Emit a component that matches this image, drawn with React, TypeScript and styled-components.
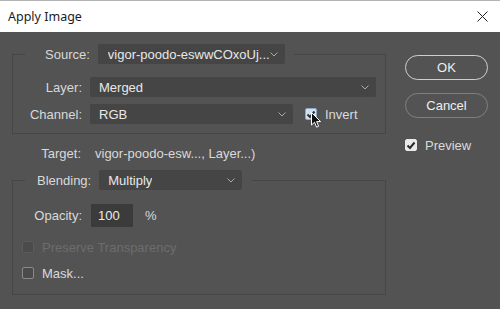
import styled, { createGlobalStyle } from "styled-components";

const GlobalStyle = createGlobalStyle`
    html, body {
        margin: 0;
        padding: 0;
        background: #535353;
    }
    body {
        font-family: "Liberation Sans", Arial, sans-serif;
        font-size: 13px;
    }
`;

const Chevron = () => (
    <svg width="8" height="5" viewBox="0 0 8 5">
        <polyline points="0.5,0.5 4,4 7.5,0.5" fill="none" stroke="#a9a9a9" strokeWidth="1" />
    </svg>
);

const Check = ({ color }: { color: string }) => (
    <svg width="10" height="9" viewBox="0 0 10 9">
        <polyline points="1.5,4.5 4,7 8.5,1.5" fill="none" stroke={color} strokeWidth="2" />
    </svg>
);

const Cursor = () => (
    <svg width="11" height="17" viewBox="0 0 11 17">
        <path d="M0.5 0.5 L0.5 13 L3.5 10.2 L5.6 15.2 L7.6 14.3 L5.6 9.6 L9.6 9.6 Z" fill="#111" stroke="#fff" strokeWidth="1" />
    </svg>
);

interface SelectProps {
    value: string;
    width: number;
    pad?: number;
}

const Select = ({ value, width, pad = 9 }: SelectProps) => (
    <SelectBox $width={width} $pad={pad}>
        <SelectText>{value}</SelectText>
        <Chevron />
    </SelectBox>
);

interface CheckProps {
    label: string;
    checked?: boolean;
    disabled?: boolean;
    hover?: boolean;
}

const CheckOption = ({ label, checked, disabled, hover }: CheckProps) => (
    <CheckRow $disabled={disabled}>
        <CheckBox $checked={checked} $disabled={disabled} $hover={hover}>
            {checked && <Check color={hover ? "#2c3440" : "#2a2a2a"} />}
            {hover && (
                <CursorSpot>
                    <Cursor />
                </CursorSpot>
            )}
        </CheckBox>
        <span>{label}</span>
    </CheckRow>
);

const App = () => {
    return (
        <>
            <GlobalStyle />
            <Window>
                <TitleBar>
                    <Title>Apply Image</Title>
                    <svg width="11" height="11" viewBox="0 0 11 11">
                        <path d="M0.5 0.5 L10.5 10.5 M10.5 0.5 L0.5 10.5" stroke="#222" strokeWidth="1" />
                    </svg>
                </TitleBar>
                <Body>
                    <Main>
                        <Group>
                            <Legend $padLeft={20} $padRight={9}>
                                <span>Source:</span>
                                <Select value="vigor-poodo-eswwCOxoUj..." width={187} pad={10} />
                            </Legend>
                            <Rows $top={13} $bottom={9} $gap={7}>
                                <Row>
                                    <Label>Layer:</Label>
                                    <Select value="Merged" width={286} />
                                </Row>
                                <Row>
                                    <Label>Channel:</Label>
                                    <Select value="RGB" width={203} />
                                    <InvertSpot>
                                        <CheckOption label="Invert" checked hover />
                                    </InvertSpot>
                                </Row>
                            </Rows>
                        </Group>
                        <TargetRow>
                            <Label>Target:</Label>
                            <TargetValue>vigor-poodo-esw..., Layer...)</TargetValue>
                        </TargetRow>
                        <Group>
                            <Legend $padLeft={12} $padRight={10}>
                                <span>Blending:</span>
                                <Select value="Multiply" width={143} />
                            </Legend>
                            <Rows $top={15} $bottom={12} $gap={0}>
                                <Row>
                                    <Label>Opacity:</Label>
                                    <NumberInput>100</NumberInput>
                                    <Percent>%</Percent>
                                </Row>
                                <Options>
                                    <CheckOption label="Preserve Transparency" disabled />
                                    <CheckOption label="Mask..." />
                                </Options>
                            </Rows>
                        </Group>
                    </Main>
                    <Side>
                        <Button $primary>OK</Button>
                        <Button>Cancel</Button>
                        <PreviewSpot>
                            <CheckOption label="Preview" checked />
                        </PreviewSpot>
                    </Side>
                </Body>
            </Window>
        </>
    );
};
export default App;

const Window = styled.div`
    width: 500px;
    height: 309px;
    display: flex;
    flex-direction: column;
    overflow: hidden;
    background: #535353;
`;

const TitleBar = styled.div`
    height: 31px;
    flex: none;
    background: #ffffff;
    border-top: 1px solid #b4b4b4;
    display: flex;
    align-items: center;
    justify-content: space-between;
    padding: 0 12px 0 8px;
`;

const Title = styled.div`
    font-family: "Noto Sans", "Open Sans", sans-serif;
    font-size: 12.5px;
    color: #1b1b1b;
    padding-bottom: 1px;
`;

const Body = styled.div`
    flex: 1;
    display: flex;
    padding: 12px 0 0 12px;
    color: #d9d9d9;
`;

const Main = styled.div`
    width: 374px;
    display: flex;
    flex-direction: column;
`;

const Group = styled.fieldset`
    margin: 0;
    padding: 0;
    min-width: 0;
    border: 1px solid #464646;
`;

const Legend = styled.legend<{ $padLeft: number; $padRight: number }>`
    display: flex;
    align-items: center;
    gap: 8px;
    margin-left: 12px;
    padding: 0 ${({ $padRight }) => $padRight}px 0 ${({ $padLeft }) => $padLeft}px;
    color: #d9d9d9;
`;

const Rows = styled.div<{ $top: number; $bottom: number; $gap: number }>`
    display: flex;
    flex-direction: column;
    gap: ${({ $gap }) => $gap}px;
    padding: ${({ $top }) => $top}px 0 ${({ $bottom }) => $bottom}px 0;
`;

const Row = styled.div`
    display: flex;
    align-items: center;
    height: 20px;
`;

const Label = styled.div`
    width: 69px;
    margin-right: 8px;
    text-align: right;
    flex: none;
`;

const SelectBox = styled.div<{ $width: number; $pad: number }>`
    width: ${({ $width }) => $width}px;
    height: 20px;
    box-sizing: border-box;
    background: #454545;
    border-radius: 2px;
    display: flex;
    align-items: center;
    justify-content: space-between;
    padding: 0 7px 0 ${({ $pad }) => $pad}px;
    color: #e8e8e8;
    flex: none;
`;

const SelectText = styled.span`
    white-space: nowrap;
    overflow: hidden;
`;

const InvertSpot = styled.div`
    margin-left: 12px;
`;

const CheckRow = styled.label<{ $disabled?: boolean }>`
    display: flex;
    align-items: center;
    gap: 8px;
    height: 18px;
    color: ${({ $disabled }) => ($disabled ? "#6d6d6d" : "#dadada")};
`;

const CheckBox = styled.span<{ $checked?: boolean; $disabled?: boolean; $hover?: boolean }>`
    position: relative;
    width: 12px;
    height: 12px;
    box-sizing: border-box;
    border-radius: 2px;
    display: flex;
    align-items: center;
    justify-content: center;
    background: ${({ $checked, $hover }) => ($hover ? "#d3dfec" : $checked ? "#e9e9e9" : "#4b4b4b")};
    border: 1px solid
        ${({ $checked, $disabled, $hover }) =>
            $hover ? "#8ea9c8" : $checked ? "#e9e9e9" : $disabled ? "#5c5c5c" : "#8a8a8a"};
`;

const CursorSpot = styled.span`
    position: absolute;
    left: 5px;
    top: 3px;
    line-height: 0;
`;

const TargetRow = styled.div`
    display: flex;
    align-items: center;
    height: 20px;
    margin: 9px 0 7px 0;
`;

const TargetValue = styled.div`
    margin-left: 6px;
    color: #d9d9d9;
`;

const NumberInput = styled.div`
    width: 42px;
    height: 23px;
    box-sizing: border-box;
    margin-left: 1px;
    background: #3b3b3b;
    display: flex;
    align-items: center;
    padding-left: 7px;
    color: #ececec;
`;

const Percent = styled.span`
    margin-left: 12px;
`;

const Options = styled.div`
    display: flex;
    flex-direction: column;
    gap: 8px;
    padding: 13px 0 0 9px;
`;

const Side = styled.div`
    width: 83px;
    margin-left: 19px;
    padding-top: 11px;
    display: flex;
    flex-direction: column;
    gap: 13px;
`;

const Button = styled.button<{ $primary?: boolean }>`
    width: 83px;
    height: 25px;
    border-radius: 13px;
    background: transparent;
    border: 1px solid ${({ $primary }) => ($primary ? "#cfcfcf" : "#808080")};
    color: #eeeeee;
    font-family: "Liberation Sans", Arial, sans-serif;
    font-size: 13px;
    padding: 0;
`;

const PreviewSpot = styled.div`
    margin-top: 5px;
`;
